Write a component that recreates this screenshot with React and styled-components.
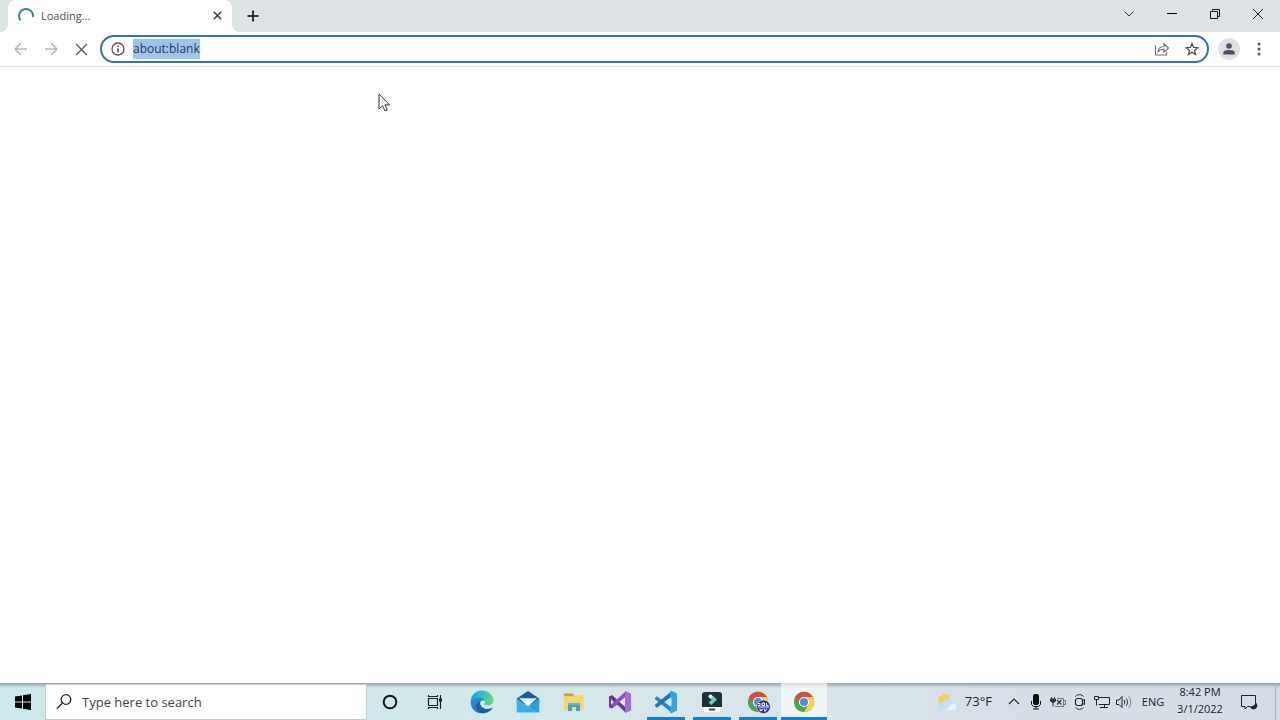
import React, { useEffect, useRef } from 'react'
import styled, { createGlobalStyle } from 'styled-components'

const GlobalStyle = createGlobalStyle`
  * {
    box-sizing: border-box;
  }

  body {
    margin: 0;
    font-family: 'Open Sans', 'Noto Sans', sans-serif;
    color: #202124;
    overflow: hidden;
  }

  button {
    margin: 0;
    padding: 0;
    border: 0;
    background: transparent;
    font: inherit;
    color: inherit;
  }

  svg {
    display: block;
    flex: none;
  }
`

const Screen = styled.div`
  display: flex;
  flex-direction: column;
  height: 100vh;
`

const TabStrip = styled.header`
  display: flex;
  align-items: flex-start;
  height: 32px;
  padding-right: 1px;
  padding-left: 8px;
  background: #dde2e5;
`

const Tab = styled.div`
  position: relative;
  display: flex;
  align-items: center;
  width: 224px;
  height: 32px;
  padding: 0 8px 1px 10px;
  border-radius: 8px 8px 0 0;
  background: #fff;
  font-size: 11px;
  color: #4a4d51;

  &::before,
  &::after {
    content: '';
    position: absolute;
    bottom: 0;
    width: 8px;
    height: 8px;
  }

  &::before {
    right: 100%;
    background: radial-gradient(circle at 0 0, #dde2e5 8px, #fff 8px);
  }

  &::after {
    left: 100%;
    background: radial-gradient(circle at 100% 0, #dde2e5 8px, #fff 8px);
  }
`

const TabTitle = styled.span`
  flex: 1;
  margin-left: 7px;
`

const TabButton = styled.button`
  display: grid;
  place-items: center;
  width: 14px;
  height: 14px;
`

const NewTab = styled.button`
  display: grid;
  place-items: center;
  width: 26px;
  height: 32px;
  margin-left: 8px;
`

const WindowControls = styled.div`
  display: flex;
  margin-left: auto;
`

const WindowButton = styled.button`
  display: grid;
  place-items: center;
  width: 43px;
  height: 27px;
`

const Toolbar = styled.div`
  display: flex;
  align-items: center;
  height: 35px;
  padding: 0 6px;
  border-bottom: 1px solid #dcdee0;
  background: #fff;
`

const ToolButton = styled.button`
  display: grid;
  place-items: center;
  width: 30px;
  height: 28px;
`

const AddressBar = styled.div`
  display: flex;
  flex: 1;
  align-items: center;
  height: 28px;
  margin: 0 5px 0 4px;
  padding-left: 1px;
  border: 2px solid #2e74b9;
  border-radius: 14px;
`

const Info = styled.button`
  display: grid;
  place-items: center;
  width: 30px;
  height: 24px;
`

const Address = styled.input`
  flex: 1;
  min-width: 0;
  height: 20px;
  padding: 0;
  border: 0;
  outline: 0;
  background: transparent;
  font: 12px/20px 'Open Sans', 'Noto Sans', sans-serif;
  color: #27394d;

  &::selection {
    background: #9dc3ee;
    color: #27394d;
  }
`

const Avatar = styled.button`
  display: grid;
  place-items: center;
  width: 22px;
  height: 22px;
  margin: 0 4px;
  border-radius: 50%;
  background: #dde1e5;
`

const Page = styled.main`
  flex: 1;
  background: #fff;
`

const Pointer = styled.svg`
  position: absolute;
  top: 93px;
  left: 378px;
`

const TaskbarRoot = styled.footer`
  display: flex;
  height: 37px;
  background:
    linear-gradient(rgba(90, 95, 100, 0.5), rgba(90, 95, 100, 0) 5px),
    linear-gradient(90deg, #cbe8ec, #d2e8eb 38%, #d9e6eb 58%, #d6dfe8 80%, #d5dce7);
`

const TaskButton = styled.button`
  display: grid;
  place-items: center;
  width: ${({ $narrow }) => ($narrow ? '45px' : '46px')};
  height: 37px;
  background-color: ${({ $active }) => ($active ? 'rgba(255, 255, 255, 0.6)' : 'transparent')};
  background-image: ${({ $open }) => ($open ? 'linear-gradient(#1480cb, #1480cb)' : 'none')};
  background-position: center bottom;
  background-repeat: no-repeat;
  background-size: ${({ $active }) => ($active ? '100%' : '38px')} 3px;
`

const Apps = styled.div`
  display: flex;
  margin-left: 2px;
`

const Search = styled.label`
  display: flex;
  align-items: center;
  width: 322px;
  height: 36px;
  margin-top: 1px;
  padding-left: 10px;
  border: 1px solid #c3cdd0;
  background: #fff;
`

const SearchInput = styled.input`
  flex: 1;
  min-width: 0;
  margin-left: 10px;
  padding: 0;
  border: 0;
  outline: 0;
  font: 13px/20px 'Open Sans', 'Noto Sans', sans-serif;

  &::placeholder {
    color: #414346;
    opacity: 1;
  }
`

const Tray = styled.div`
  display: flex;
  align-items: center;
  margin-left: auto;
  font-size: 11px;
  line-height: 17px;
  color: #202226;
`

const Weather = styled.button`
  display: flex;
  align-items: center;
  gap: 6px;
  margin-right: 11px;
  font-size: 13px;
`

const TrayButton = styled.button`
  display: grid;
  place-items: center;
  width: 22px;
  height: 37px;
`

const Language = styled.button`
  width: 36px;
`

const Clock = styled.button`
  width: 58px;
  padding-bottom: 3px;
  text-align: center;
`

const Notifications = styled(TrayButton)`
  width: 40px;
`

const ShowDesktop = styled.button`
  width: 5px;
  height: 37px;
  margin-left: 6px;
  border-left: 1px solid #aab3bd;
`

const Spinner = () => (
  <svg width="16" height="16" viewBox="0 0 16 16" fill="none" stroke="#3b7dc4" strokeWidth="2">
    <path d="M3 13A7 7 0 0 1 14.9 9" stroke="none" />
    <path d="M2.500 12.300A7 7 0 1 1 15 9" />
  </svg>
)

const Cross = ({ size, width = 1, color = '#202124' }) => (
  <svg width={size} height={size} viewBox="0 0 12 12" stroke={color} strokeWidth={width}>
    <path d="M1 1l10 10M11 1L1 11" />
  </svg>
)

const Arrow = ({ forward }) => (
  <svg width="14" height="14" viewBox="0 0 14 14" fill="none" stroke="#b4b6b8" strokeWidth="1.5">
    <path d={forward ? 'M1 7h11.5M7 1l6 6-6 6' : 'M13 7H1.5M7 1L1 7l6 6'} />
  </svg>
)

const ShareIcon = () => (
  <svg width="16" height="16" viewBox="0 0 16 16" fill="none" stroke="#696c70" strokeWidth="1.1">
    <path d="M1.500 4.500v9.500h11v-3" />
    <path d="M4 11c.3-3.800 2.500-5.500 6-5.500V2.800L14.500 7 10 11V8.300C7.500 8.200 5.500 9 4 11z" />
  </svg>
)

const StarIcon = () => (
  <svg width="14" height="14" viewBox="0 0 14 14" fill="none" stroke="#4c4f53" strokeWidth="1.3">
    <path d="M7 1.500l1.600 3.800 4.200.4-3.200 2.700 1 4.100L7 10.300l-3.600 2.200 1-4.100-3.200-2.700 4.200-.4z" />
  </svg>
)

const ChromeIcon = ({ profile }) => (
  <svg width="26" height="24" viewBox="0 0 26 24">
    <g transform="translate(2.500 1.500)">
      <circle cx="10.500" cy="10.500" r="10.200" fill="#4ba650" />
      <path d="M1.670 5.400A10.200 10.200 0 0 1 19.330 5.400H10.500L6 13.100z" fill="#dc4a3d" />
      <path d="M19.330 5.400A10.200 10.200 0 0 1 10.500 20.700l4.400-7.700L10.500 5.400z" fill="#fdd04a" />
      <circle cx="10.500" cy="10.500" r="5.100" fill="#fff" />
      <circle cx="10.500" cy="10.500" r="4" fill="#4c8bea" />
    </g>
    {profile && (
      <g>
        <circle cx="18.500" cy="16.800" r="6.800" fill="#22309a" stroke="#e6ecf5" strokeWidth=".6" />
        <g fill="none" stroke="#fff" strokeWidth="1">
          <path d="M13 13.500h2v2h-2M17 13h2.500v2.500H17zM21.500 13v2.500h2M13 17h11" />
          <path d="M15 18.500v2h2v-2M19 18.500l1 3 2-3" />
        </g>
      </g>
    )}
  </svg>
)

const EdgeIcon = () => (
  <svg width="24" height="24" viewBox="0 0 24 24">
    <defs>
      <linearGradient id="edgeTop" x1="0" y1=".4" x2="1" y2=".5">
        <stop offset="0" stopColor="#2193d6" />
        <stop offset=".5" stopColor="#35c1c6" />
        <stop offset="1" stopColor="#67da63" />
      </linearGradient>
      <linearGradient id="edgeSide" x1="0" y1="0" x2=".5" y2="1">
        <stop offset="0" stopColor="#2793dc" />
        <stop offset="1" stopColor="#1673c4" />
      </linearGradient>
    </defs>
    <path d="M.7 11.500C1 5 6 .6 12 .6S23.400 5 23.400 10.600c0 3-2.200 5.100-5.300 5.100-2.700 0-4.100-.8-4.100-1.700 0-.6.9-1 .9-2.500 0-2.400-2.400-4.200-5.400-4.200C5.600 7.300 2.400 9 .7 11.500z" fill="url(#edgeTop)" />
    <path d="M.6 12C1.700 8.800 5.400 7.200 9.300 7.300c3.200.1 5.600 2 5.600 4.300-.9-.8-2-1.100-3.200-.8-3.100.8-4 4-2.700 7 1.100 2.500 3.400 4.600 6.500 5C7.500 25 .6 19.600.6 12z" fill="url(#edgeSide)" />
    <path d="M11 11c-3.600 1.500-5.600 4.300-4.400 7.400 1.100 3 4.400 5.200 8.300 4.700 3-.4 5.700-2 7.300-4.500.4-.7-.2-1.100-.8-.8-4.500 2.200-10.200.4-10.900-3.800-.2-1.200 0-2.200.5-3z" fill="#1a5da4" />
    <path d="M11.200 11c1.300-.8 2.900-.4 3.700.6 0 1.400-.9 1.800-.9 2.400 0 .9 1.400 1.700 4.100 1.700 1.700 0 3.200-.6 4.100-1.700-.3 1.600-.5 2.700-1 3.900-4.500 2-10 .2-10.700-3.900-.2-1.200.1-2.200.7-3z" fill="#d8eaee" />
  </svg>
)

const MailIcon = () => (
  <svg width="24" height="24" viewBox="0 0 24 24">
    <path d="M.8 8.500L12 1l11.200 7.500V14H.8z" fill="#135da6" />
    <path d="M.8 8.500L12 16.500 23.200 8.500V22.500H.8z" fill="#35b2e7" />
    <path d="M23.200 8.500v14L9.500 15z" fill="#1a8bd1" opacity=".45" />
    <path d="M3 8.300h18l-9 8z" fill="#f5f9fc" />
  </svg>
)

const FolderIcon = () => (
  <svg width="22" height="20" viewBox="0 0 22 20">
    <path d="M1 1.500h9l1 3H1z" fill="#d99a2c" />
    <path d="M1 4.500h10l2-1.500h7.500v15H1z" fill="#f8d66a" />
    <path d="M5 19v-8h12v8h-4v-4H9v4z" fill="#45a0d0" />
    <path d="M5 11h12v2H5z" fill="#5fb3dd" />
  </svg>
)

const VisualStudioIcon = () => (
  <svg width="24" height="24" viewBox="0 0 24 24">
    <path d="M1 6.500L4 5l14 12.500V23L9 14.500 4 18.500 1 17.300zM3 9v6l3-3z" fill="#67349d" fillRule="evenodd" />
    <path d="M4 18.500L18 6.500V1L4 14z" fill="#8a4fc4" />
    <path d="M17 1l6 2.500v17L17 23z" fill="#a66ae0" />
    <path d="M17 7.500L11.500 12l5.500 4.500z" fill="#e6e4f3" />
  </svg>
)

const CodeIcon = () => (
  <svg width="24" height="24" viewBox="0 0 24 24">
    <path d="M1 8l2-1.800L18 18v5L1 9.300z" fill="#218bc7" />
    <path d="M1 16l2 1.800L18 6V1L1 14.700z" fill="#1c75b3" />
    <path d="M17.500.8l5.500 2.600v17.200l-5.500 2.600-1.500-.8V1.600z" fill="#2da8e3" />
    <path d="M17.500 7.500L12 12l5.500 4.500z" fill="#d9e7ed" />
  </svg>
)

const FilmoraIcon = () => (
  <svg width="22" height="22" viewBox="0 0 22 22">
    <rect x="1" y="1" width="20" height="20" rx="3" fill="#1e3038" />
    <path d="M1 16h20v2.500a2.500 2.500 0 0 1-2.500 2.500h-15A2.500 2.500 0 0 1 1 18.500z" fill="#f8f8f8" />
    <path d="M9 6.500l3-1.500 4 3.500-5.500 5.500-3-2.500L10.500 9z" fill="#51dfbf" />
    <circle cx="9.500" cy="5.500" r="2" fill="#fff" />
    <path d="M8 17.500h6v2H8z" fill="#3c4348" />
  </svg>
)

const WeatherIcon = () => (
  <svg width="22" height="20" viewBox="0 0 22 20">
    <path d="M7 1l1.500 2 3-1 .5 3 2 3-7 6-3-2-3-.5 1-3L1 5l3-.5z" fill="#f8cf48" />
    <path d="M6 18a4 4 0 0 1-.2-8A6 6 0 0 1 16 9a4.500 4.500 0 0 1 1 9z" fill="#c2e1f4" />
    <path d="M5 17.500c5 .5 7-1.500 8.500-4.500 1.500-2 4.500-2 6 .5.7 2.500-.5 4.500-2.500 4.500H6z" fill="#e9f6fd" />
  </svg>
)

const MicIcon = () => (
  <svg width="12" height="16" viewBox="0 0 12 16">
    <rect x="3" y="0" width="6" height="11" rx="2" fill="#111" />
    <path d="M1.500 7v3.500l2 2h5l2-2V7M6 12.500v2.500M3 15h6" fill="none" stroke="#111" />
  </svg>
)

const BatteryIcon = () => (
  <svg width="16" height="12" viewBox="0 0 16 12" fill="none" stroke="#30343a">
    <path d="M1.500 1v2M4.500 1v2M3 6.500v4" />
    <path d="M.5 3h5v2L4 6.500H2L.5 5z" fill="#30343a" />
    <path d="M7 4l4.500 4.500M11.500 4L7 8.500" strokeWidth="1.200" />
    <path d="M7 2.500h6.500v8H5M14 4.500h1.500v4H14" opacity=".6" />
  </svg>
)

const MeetIcon = () => (
  <svg width="14" height="16" viewBox="0 0 14 16" fill="none" stroke="#1e2126">
    <path d="M2.500 2.500C4.500 0 8.500 0 10.500 2.500M2.500 13.500c2 2.500 6 2.500 8 0" />
    <rect x="2.500" y="4.500" width="7" height="7" rx="2" strokeWidth="1.200" />
    <path d="M9.500 6.500l2-1v5l-2-1" />
  </svg>
)

const NetworkIcon = () => (
  <svg width="16" height="14" viewBox="0 0 16 14" fill="none" stroke="#1e2126">
    <path d="M5 2.500h10.500v7h-11M10.500 9.500v3M6 12.500h8" />
    <path d="M.5 1.500h4v3h-4zM2.500 4.500v6" />
  </svg>
)

const VolumeIcon = () => (
  <svg width="16" height="14" viewBox="0 0 16 14" fill="none" stroke="#1e2126">
    <path d="M.5 5v4.500H3l3 3v-11L3 5zM8 5c1 1 1 3.500 0 4.500M10 3.500c2 2 2 5.500 0 7.500" />
    <path d="M12.500 1.500c3 3 3 8.500 0 11.500" opacity=".5" />
  </svg>
)

const NotificationIcon = () => (
  <svg width="18" height="18" viewBox="0 0 18 18">
    <path d="M10 13.500H7.500l-2.500 2.500v-2.500H1.500v-11h14v8" fill="none" stroke="#202329" />
    <path d="M15.800 9.500A3.800 3.800 0 1 1 9.800 13.500C13 13.500 15 12 15.800 9.500z" fill="#202329" />
  </svg>
)

const Browser = () => {
  const address = useRef(null)

  useEffect(() => {
    address.current.focus()
    address.current.select()
  }, [])

  return (
    <>
      <TabStrip>
        <Tab>
          <Spinner />
          <TabTitle>Loading...</TabTitle>
          <TabButton aria-label="Close tab">
            <Cross size={9} width={2} color="#3c4043" />
          </TabButton>
        </Tab>
        <NewTab aria-label="New tab">
          <svg width="12" height="12" viewBox="0 0 12 12" stroke="#303336" strokeWidth="2">
            <path d="M6 .5v11M.5 6h11" />
          </svg>
        </NewTab>
        <WindowControls>
          <WindowButton aria-label="Search tabs">
            <svg width="10" height="6" viewBox="0 0 10 6" fill="none" stroke="#333">
              <path d="M.5.5L5 5l4.500-4.500" />
            </svg>
          </WindowButton>
          <WindowButton aria-label="Minimize">
            <svg width="10" height="1" viewBox="0 0 10 1">
              <path d="M0 0h10v1H0z" />
            </svg>
          </WindowButton>
          <WindowButton aria-label="Restore">
            <svg width="10" height="10" viewBox="0 0 10 10" fill="none" stroke="#111">
              <path d="M.5 2.500h7v7h-7zM2.500 2.500v-2h7v7h-2" />
            </svg>
          </WindowButton>
          <WindowButton aria-label="Close">
            <Cross size={12} />
          </WindowButton>
        </WindowControls>
      </TabStrip>
      <Toolbar>
        <ToolButton aria-label="Back">
          <Arrow />
        </ToolButton>
        <ToolButton aria-label="Forward">
          <Arrow forward />
        </ToolButton>
        <ToolButton aria-label="Stop loading">
          <Cross size={13} width={1.3} color="#5a5d61" />
        </ToolButton>
        <AddressBar>
          <Info aria-label="Site information">
            <svg width="14" height="14" viewBox="0 0 14 14" fill="none" stroke="#505357" strokeWidth="1.300">
              <circle cx="7" cy="7" r="6" />
              <path d="M7 6.200v4.300M7 3.500v1.500" strokeWidth="1.500" />
            </svg>
          </Info>
          <Address ref={address} aria-label="Address" defaultValue="about:blank" spellCheck={false} />
          <ToolButton aria-label="Share">
            <ShareIcon />
          </ToolButton>
          <ToolButton aria-label="Bookmark">
            <StarIcon />
          </ToolButton>
        </AddressBar>
        <Avatar aria-label="Profile">
          <svg width="12" height="12" viewBox="0 0 12 12" fill="#4d5261">
            <circle cx="6" cy="3" r="2.800" />
            <path d="M.3 11.500V9.600C.3 7.700 3 7 6 7s5.700.7 5.700 2.600v1.900z" />
          </svg>
        </Avatar>
        <ToolButton aria-label="Menu">
          <svg width="4" height="14" viewBox="0 0 4 14" fill="#505357">
            <circle cx="2" cy="2" r="1.500" />
            <circle cx="2" cy="7" r="1.500" />
            <circle cx="2" cy="12" r="1.500" />
          </svg>
        </ToolButton>
      </Toolbar>
      <Page />
    </>
  )
}

const apps = [
  { name: 'Microsoft Edge', icon: <EdgeIcon /> },
  { name: 'Mail', icon: <MailIcon /> },
  { name: 'File Explorer', icon: <FolderIcon /> },
  { name: 'Visual Studio', icon: <VisualStudioIcon /> },
  { name: 'Visual Studio Code', icon: <CodeIcon />, open: true },
  { name: 'Filmora', icon: <FilmoraIcon />, open: true },
  { name: 'Chrome profile', icon: <ChromeIcon profile />, open: true },
  { name: 'Chrome', icon: <ChromeIcon />, open: true, active: true },
]

const trayIcons = [
  {
    name: 'Show hidden icons',
    icon: (
      <svg width="12" height="7" viewBox="0 0 12 7" fill="none" stroke="#222" strokeWidth="1.200">
        <path d="M1 6l5-5 5 5" />
      </svg>
    ),
  },
  { name: 'Microphone', icon: <MicIcon /> },
  { name: 'Battery', icon: <BatteryIcon /> },
  { name: 'Meet Now', icon: <MeetIcon /> },
  { name: 'Network', icon: <NetworkIcon /> },
  { name: 'Volume', icon: <VolumeIcon /> },
]

const Taskbar = () => (
  <TaskbarRoot>
    <TaskButton $narrow aria-label="Start">
      <svg width="16" height="16" viewBox="0 0 16 16">
        <path d="M0 2.500l7-1v6H0zM8 1.300L16 0v7.500H8zM0 8.500h7v6l-7-1zM8 8.500h8V16l-8-1.300z" />
      </svg>
    </TaskButton>
    <Search>
      <svg width="16" height="16" viewBox="0 0 16 16" fill="none" stroke="#24272a" strokeWidth="1.300">
        <circle cx="10" cy="5.500" r="4.800" />
        <path d="M6.500 9L.8 14.700" />
      </svg>
      <SearchInput aria-label="Search" placeholder="Type here to search" />
    </Search>
    <TaskButton $narrow aria-label="Cortana">
      <svg width="16" height="16" viewBox="0 0 16 16" fill="none" stroke="#14181a" strokeWidth="2">
        <circle cx="8" cy="8" r="6.300" />
      </svg>
    </TaskButton>
    <TaskButton $narrow aria-label="Task view">
      <svg width="16" height="16" viewBox="0 0 16 16" fill="none" stroke="#1d2225" strokeWidth="1.200">
        <path d="M1.500 4.500h9v7h-9zM1.500 1v1.500h9V1M1.500 15v-1.500h9V15M13.500 1v14" />
        <path d="M12 4.500h3v3h-3z" fill="#1d2225" stroke="none" />
      </svg>
    </TaskButton>
    <Apps>
      {apps.map(({ name, icon, open, active }) => (
        <TaskButton key={name} aria-label={name} $open={open} $active={active}>
          {icon}
        </TaskButton>
      ))}
    </Apps>
    <Tray>
      <Weather>
        <WeatherIcon />
        73°F
      </Weather>
      {trayIcons.map(({ name, icon }) => (
        <TrayButton key={name} aria-label={name}>
          {icon}
        </TrayButton>
      ))}
      <Language>ENG</Language>
      <Clock>
        8:42 PM
        <br />
        3/1/2022
      </Clock>
      <Notifications aria-label="Notifications">
        <NotificationIcon />
      </Notifications>
      <ShowDesktop aria-label="Show desktop" />
    </Tray>
  </TaskbarRoot>
)

const App = () => (
  <Screen>
    <GlobalStyle />
    <Browser />
    <Taskbar />
    <Pointer width="13" height="20" viewBox="0 0 13 20" fill="#fff" stroke="#333">
      <path d="M1 1v15l3.500-3.300L7 18l2.300-1-2.400-5.200H11.500z" />
    </Pointer>
  </Screen>
)

export default App
